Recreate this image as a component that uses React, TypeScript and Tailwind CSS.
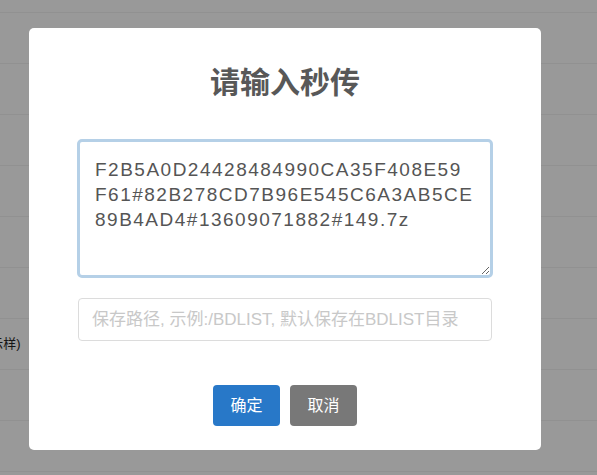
import React from 'react';

const hash = 'F2B5A0D24428484990CA35F408E59\nF61#82B278CD7B96E545C6A3AB5CE\n89B4AD4#13609071882#149.7z';

const App: React.FC = () => {
    const rows = Array.from({ length: 9 });

    return (
        <div className="relative w-full h-[475px] overflow-hidden bg-[#999999] font-['Liberation_Sans','Noto_Sans_CJK_SC',sans-serif]">
            {/* Page behind the mask */}
            <div className="flex flex-col">
                <div className="h-[13px] border-b border-[#919191]" />
                {rows.map((_, i) => (
                    <div key={i} className="h-[51px] border-b border-[#919191] flex items-center overflow-hidden">
                        {i === 6 && (
                            <span className="ml-[-14px] text-[13px] text-[#161616] whitespace-nowrap">(示样)</span>
                        )}
                    </div>
                ))}
            </div>

            {/* Dialog */}
            <div className="absolute left-[29px] top-[28px] w-[512px] h-[422px] bg-white rounded-[5px] flex flex-col items-center pt-[34px]">
                <h2 className="text-[30px] leading-[36px] font-bold text-[#585858] font-['Noto_Sans_CJK_SC',sans-serif]">请输入秒传</h2>

                <textarea
                    defaultValue={hash}
                    wrap="off"
                    className="mt-[41px] w-[416px] h-[139px] shrink-0 overflow-hidden border-[3px] border-[#b5d0e7] rounded-[5px] p-[15px] text-[19px] leading-[25px] tracking-[1.5px] text-[#555555] outline-none resize-y font-['Liberation_Sans',sans-serif]"
                />

                <input
                    placeholder="保存路径, 示例:/BDLIST, 默认保存在BDLIST目录"
                    className="mt-[20px] w-[414px] h-[43px] shrink-0 border border-[#dcdcdc] rounded-[4px] px-[13px] text-[17px] text-[#555555] placeholder:text-[#c8c8c8] outline-none"
                />

                <div className="mt-[44px] flex gap-[10px]">
                    <button className="w-[67px] h-[41px] rounded-[4px] bg-[#2878c8] text-white text-[16px]">确定</button>
                    <button className="w-[67px] h-[41px] rounded-[4px] bg-[#787878] text-white text-[16px]">取消</button>
                </div>
            </div>
        </div>
    );
};

export default App;
